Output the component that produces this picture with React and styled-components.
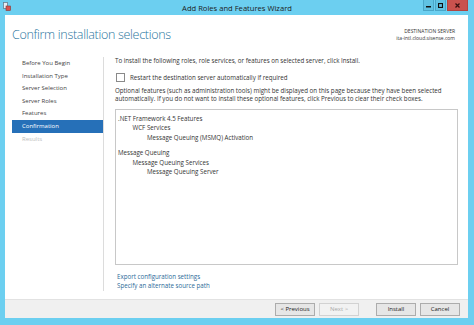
import React from 'react';
import styled, { createGlobalStyle } from 'styled-components';

const GlobalStyle = createGlobalStyle`
  html, body {
    margin: 0;
    padding: 0;
    background: #6ccff0;
  }
  body {
    font-family: "Open Sans", "Noto Sans", "Liberation Sans", sans-serif;
  }
`

const Window = styled.div`
  width: 474px;
  height: 325px;
  display: flex;
  flex-direction: column;
  background: #6ccff0;
  overflow: hidden;
`

const TitleBar = styled.div`
  height: 15px;
  flex: none;
  position: relative;
  display: flex;
  align-items: center;
  justify-content: center;
`

const TitleText = styled.span`
  font-size: 7.6px;
  color: #1c1c1c;
`

const AppIcon = styled.svg`
  position: absolute;
  left: 3px;
  top: 2px;
`

const Controls = styled.div`
  position: absolute;
  right: 6px;
  top: 0;
  display: flex;
  gap: 1px;
`

const CtlButton = styled.div`
  width: ${p => (p.close ? '19px' : '9px')};
  height: 10px;
  background: ${p => (p.close ? '#c9524e' : '#60c2e3')};
  border: 1px solid ${p => (p.close ? '#b24541' : '#4aa6c8')};
  border-top: none;
  display: flex;
  align-items: center;
  justify-content: center;
`

const Frame = styled.div`
  flex: 1;
  margin: 0 6px 7px 5px;
  background: #ffffff;
  display: flex;
  flex-direction: column;
`

const Header = styled.div`
  display: flex;
  justify-content: space-between;
  align-items: flex-start;
  padding: 11px 13px 0 7px;
  height: 27px;
`

const Heading = styled.h1`
  margin: 0;
  font-size: 12.5px;
  font-weight: 300;
  color: #2a76a0;
  letter-spacing: -0.3px;
`

const Destination = styled.div`
  text-align: right;
  font-size: 5px;
  line-height: 7px;
  color: #333;
  padding-top: 2px;
`

const Main = styled.div`
  flex: 1;
  display: flex;
  padding-top: 4px;
`

const Nav = styled.ul`
  list-style: none;
  margin: 0;
  padding: 0 0 0 7px;
  width: 91px;
  border-right: 1px solid #dcdcdc;
  height: 234px;
`

const NavItem = styled.li`
  height: 12.6px;
  line-height: 12.6px;
  padding-left: 10px;
  font-size: 6px;
  color: ${p => (p.active ? '#ffffff' : p.disabled ? '#bdbdbd' : '#444')};
  background: ${p => (p.active ? '#2670b8' : 'transparent')};
`

const Content = styled.div`
  flex: 1;
  padding: 0 10px 0 11px;
  display: flex;
  flex-direction: column;
  font-size: 6.2px;
  color: #333;
`

const Para = styled.p`
  margin: 0;
  line-height: 8.5px;
`

const CheckRow = styled.label`
  display: flex;
  align-items: center;
  gap: 5px;
  margin: 7px 0 5px 1px;
`

const Box = styled.span`
  width: 7px;
  height: 7px;
  border: 1px solid #8a8a8a;
  background: #fff;
`

const FeatureBox = styled.div`
  margin-top: 5px;
  height: 156px;
  border: 1px solid #c8c8c8;
  padding: 4px 2px;
  box-sizing: border-box;
`

const Feature = styled.div`
  padding-left: ${p => p.level * 14.5}px;
  line-height: 9.5px;
  margin-top: ${p => (p.gap ? '6px' : '0')};
`

const Links = styled.div`
  margin-top: 7px;
  padding-left: 2px;
  display: flex;
  flex-direction: column;
`

const Link = styled.a`
  color: #2b6a98;
  line-height: 9px;
  text-decoration: none;
`

const Footer = styled.div`
  height: 19px;
  flex: none;
  background: #f0f0f0;
  border-top: 1px solid #e2e2e2;
  box-sizing: border-box;
  display: flex;
  align-items: center;
  justify-content: flex-end;
  padding: 0 8px 0 0;
`

const Button = styled.button`
  width: 40px;
  height: 13px;
  margin-left: ${p => (p.spaced ? '17px' : '4px')};
  padding: 0;
  font-family: inherit;
  font-size: 6px;
  color: ${p => (p.disabled ? '#a8a8a8' : '#222')};
  background: ${p => (p.disabled ? '#f2f2f2' : '#e6e6e6')};
  border: 1px solid ${p => (p.disabled ? '#d2d2d2' : '#acacac')};
  border-radius: 0;
`

const steps = [
  'Before You Begin',
  'Installation Type',
  'Server Selection',
  'Server Roles',
  'Features',
  'Confirmation',
  'Results',
];

const features = [
  { text: '.NET Framework 4.5 Features', level: 0 },
  { text: 'WCF Services', level: 1 },
  { text: 'Message Queuing (MSMQ) Activation', level: 2 },
  { text: 'Message Queuing', level: 0, gap: true },
  { text: 'Message Queuing Services', level: 1 },
  { text: 'Message Queuing Server', level: 2 },
];

export default function App() {
  return (
    <Window>
      <GlobalStyle />
      <TitleBar>
        <AppIcon width="8" height="9" viewBox="0 0 8 9">
          <rect x="0.5" y="0.5" width="4" height="6" fill="#e8eef3" stroke="#6a7f90" strokeWidth="0.8" />
          <rect x="3" y="4" width="4.5" height="4.5" fill="#d9534f" stroke="#8a3330" strokeWidth="0.6" />
        </AppIcon>
        <TitleText>Add Roles and Features Wizard</TitleText>
        <Controls>
          <CtlButton>
            <svg width="5" height="5" viewBox="0 0 5 5"><rect x="0" y="3" width="5" height="1.5" fill="#111" /></svg>
          </CtlButton>
          <CtlButton>
            <svg width="5" height="5" viewBox="0 0 5 5"><rect x="0.5" y="0.5" width="4" height="4" fill="none" stroke="#111" strokeWidth="1.2" /></svg>
          </CtlButton>
          <CtlButton close>
            <svg width="5" height="5" viewBox="0 0 5 5"><path d="M0.5 0.5 L4.5 4.5 M4.5 0.5 L0.5 4.5" stroke="#3a1010" strokeWidth="1.3" /></svg>
          </CtlButton>
        </Controls>
      </TitleBar>
      <Frame>
        <Header>
          <Heading>Confirm installation selections</Heading>
          <Destination>
            <div>DESTINATION SERVER</div>
            <div>ita-intl.cloud.sisense.com</div>
          </Destination>
        </Header>
        <Main>
          <Nav>
            {steps.map((s, i) => (
              <NavItem key={s} active={i === 5} disabled={i === 6}>{s}</NavItem>
            ))}
          </Nav>
          <Content>
            <Para>To install the following roles, role services, or features on selected server, click Install.</Para>
            <CheckRow>
              <Box />
              <span>Restart the destination server automatically if required</span>
            </CheckRow>
            <Para>
              Optional features (such as administration tools) might be displayed on this page because they have been selected
              automatically. If you do not want to install these optional features, click Previous to clear their check boxes.
            </Para>
            <FeatureBox>
              {features.map(f => (
                <Feature key={f.text} level={f.level} gap={f.gap}>{f.text}</Feature>
              ))}
            </FeatureBox>
            <Links>
              <Link>Export configuration settings</Link>
              <Link>Specify an alternate source path</Link>
            </Links>
          </Content>
        </Main>
        <Footer>
          <Button>&lt; Previous</Button>
          <Button disabled>Next &gt;</Button>
          <Button spaced>Install</Button>
          <Button>Cancel</Button>
        </Footer>
      </Frame>
    </Window>
  );
}
